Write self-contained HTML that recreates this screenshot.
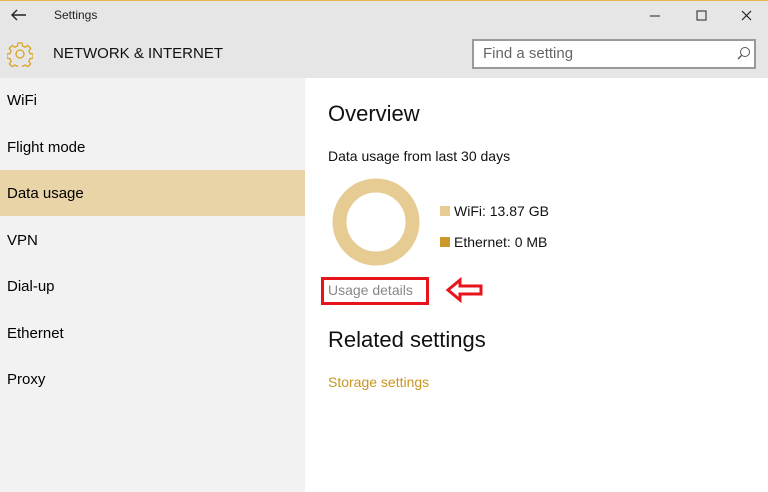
<!DOCTYPE html><html><head><style>
body{margin:0;width:768px;height:492px;overflow:hidden;font-family:"Liberation Sans",sans-serif;background:#fff;position:relative}
.a{position:absolute}
.nav{font-size:15px;color:#000;left:7px}
</style></head><body>
<div class="a" style="left:0;top:0;width:768px;height:78px;background:#e6e6e6;border-top:1px solid #e8b84a;box-sizing:border-box"></div>
<svg class="a" style="left:10px;top:8px" width="18" height="14"><path d="M16 7H2M7 2L2 7l5 5" stroke="#222" stroke-width="1.4" fill="none"/></svg>
<div class="a" style="left:54px;top:8px;font-size:12px;color:#222">Settings</div>
<svg class="a" style="left:650px;top:9px" width="110" height="14"><path d="M0 7h10" stroke="#222"/><rect x="47" y="2" width="9" height="9" stroke="#222" fill="none"/><path d="M92 2l9 9M101 2l-9 9" stroke="#222" stroke-width="1.2"/></svg>
<svg class="a" style="left:7px;top:41px" width="26" height="26" viewBox="-13 -13 26 26"><g stroke="#d9a520" stroke-width="1.3" fill="none"><path d="M-2-11h4l.6 3 2.6 1.2 2.6-1.7 2.8 2.8-1.7 2.6 1.2 2.6 3 .6v4l-3 .6-1.2 2.6 1.7 2.6-2.8 2.8-2.6-1.7-2.6 1.2-.6 3h-4l-.6-3-2.6-1.2-2.6 1.7-2.8-2.8 1.7-2.6-1.2-2.6-3-.6v-4l3-.6 1.2-2.6-1.7-2.6 2.8-2.8 2.6 1.7 2.6-1.2z"/><circle r="4"/></g></svg>
<div class="a" style="left:53px;top:45px;font-size:15px;color:#111">NETWORK &amp; INTERNET</div>
<div class="a" style="left:472px;top:39px;width:284px;height:30px;box-sizing:border-box;border:2px solid #999;background:#fff"></div>
<div class="a" style="left:483px;top:45px;font-size:15px;color:#666">Find a setting</div>
<svg class="a" style="left:737px;top:46px" width="14" height="14"><circle cx="8" cy="6" r="4.5" stroke="#555" fill="none"/><path d="M5 9L1 13" stroke="#555" stroke-width="1.3"/></svg>
<div class="a" style="left:0;top:78px;width:305px;height:414px;background:#f2f2f2"></div>
<div class="a" style="left:0;top:170px;width:305px;height:46px;background:#e8d4a6"></div>
<div class="a nav" style="top:92px">WiFi</div>
<div class="a nav" style="top:139px">Flight mode</div>
<div class="a nav" style="top:185px">Data usage</div>
<div class="a nav" style="top:232px">VPN</div>
<div class="a nav" style="top:278px">Dial-up</div>
<div class="a nav" style="top:325px">Ethernet</div>
<div class="a nav" style="top:371px">Proxy</div>
<div class="a" style="left:328px;top:101px;font-size:22px;color:#111">Overview</div>
<div class="a" style="left:328px;top:148px;font-size:14px;color:#111">Data usage from last 30 days</div>
<svg class="a" style="left:332px;top:178px" width="88" height="88"><circle cx="44" cy="44" r="36.5" stroke="#e6cc93" stroke-width="14" fill="none"/></svg>
<div class="a" style="left:440px;top:206px;width:10px;height:10px;background:#e6cc93"></div>
<div class="a" style="left:454px;top:203px;font-size:14px;color:#111">WiFi: 13.87 GB</div>
<div class="a" style="left:440px;top:237px;width:10px;height:10px;background:#c99a2a"></div>
<div class="a" style="left:454px;top:234px;font-size:14px;color:#111">Ethernet: 0 MB</div>
<div class="a" style="left:321px;top:277px;width:108px;height:28px;box-sizing:border-box;border:3px solid #e8141c"></div>
<div class="a" style="left:328px;top:282px;font-size:14px;color:#888">Usage details</div>
<svg class="a" style="left:445px;top:277px" width="42" height="26"><path d="M3 13L15 3v6h21v8H15v6z" stroke="#e8141c" stroke-width="3" fill="#fff"/></svg>
<div class="a" style="left:328px;top:327px;font-size:22px;color:#111">Related settings</div>
<div class="a" style="left:328px;top:374px;font-size:14px;color:#c9951f">Storage settings</div>
</body></html>
